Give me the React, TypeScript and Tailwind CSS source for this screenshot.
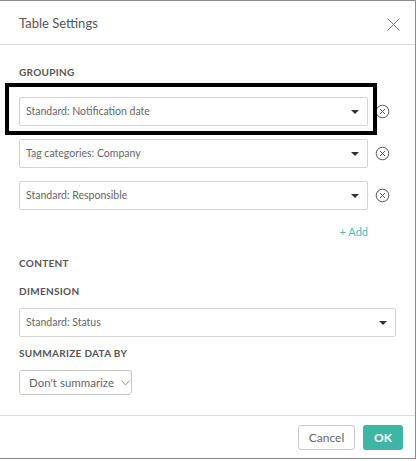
import React from 'react';

const font = { fontFamily: 'Lato, "Liberation Sans", sans-serif' };

function Caret() {
  return (
    <svg width="10" height="6" viewBox="0 0 10 6" className="shrink-0">
      <path d="M1 1h8L5 5z" fill="#333" />
    </svg>
  );
}

function RemoveIcon() {
  return (
    <svg width="15" height="15" viewBox="0 0 15 15" className="shrink-0">
      <circle cx="7.5" cy="7.5" r="6.3" fill="none" stroke="#555" strokeWidth="1" />
      <path d="M5 5l5 5M10 5l-5 5" stroke="#555" strokeWidth="1" />
    </svg>
  );
}

function SelectBox({ label, wide }: { label: string; wide?: boolean }) {
  return (
    <div
      className={`${wide ? 'w-[377px]' : 'w-[349px]'} h-[29px] border border-[#d4d4d4] rounded-[2px] bg-white flex items-center justify-between pl-[6px] pr-[7px]`}
    >
      <span className="text-[10.5px] text-[#666] whitespace-nowrap">{label}</span>
      <Caret />
    </div>
  );
}

function GroupRow({ label }: { label: string }) {
  return (
    <div className="flex items-center gap-[7px]">
      <SelectBox label={label} />
      <RemoveIcon />
    </div>
  );
}

function SectionLabel({ children }: { children: React.ReactNode }) {
  return (
    <div className="text-[10px] font-bold tracking-[0.3px] text-[#555] leading-[14px]">{children}</div>
  );
}

export default function App() {
  return (
    <div className="w-[418px] h-[461px] bg-white relative" style={font}>
      <div className="w-[416px] h-[459px] border border-l-0 border-[#8c8c8c] flex flex-col bg-white">
        {/* header */}
        <div className="h-[44px] border-b border-[#dcdcdc] flex items-center justify-between pl-[19px] pr-[15px] pt-[3px]">
          <span className="text-[13px] text-[#555]">Table Settings</span>
          <svg width="13" height="13" viewBox="0 0 13 13">
            <path d="M0.5 0.5l12 12M12.5 0.5l-12 12" stroke="#777" strokeWidth="1" />
          </svg>
        </div>

        {/* body */}
        <div className="flex-1 px-[19px] pt-[20px]">
          <SectionLabel>GROUPING</SectionLabel>
          <div className="mt-[18px] flex flex-col gap-[13px]">
            <GroupRow label="Standard: Notification date" />
            <GroupRow label="Tag categories: Company" />
            <GroupRow label="Standard: Responsible" />
          </div>
          <div className="w-[349px] flex justify-end mt-[15px]">
            <span className="text-[11px] text-[#4dbdab] leading-[14px]">+ Add</span>
          </div>
          <div className="mt-[17px]">
            <SectionLabel>CONTENT</SectionLabel>
          </div>
          <div className="mt-[14px]">
            <SectionLabel>DIMENSION</SectionLabel>
          </div>
          <div className="mt-[10px]">
            <SelectBox label="Standard: Status" wide />
          </div>
          <div className="mt-[9px]">
            <SectionLabel>SUMMARIZE DATA BY</SectionLabel>
          </div>
          <button className="mt-[10px] w-[113px] h-[25px] border border-[#c8c8c8] rounded-[3px] flex items-center pl-[9px] gap-[7px]">
            <span className="text-[11.5px] text-[#666] whitespace-nowrap">Don't summarize</span>
            <svg width="9" height="6" viewBox="0 0 9 6" className="shrink-0">
              <path d="M0.5 0.5l4 4.5 4-4.5" fill="none" stroke="#999" strokeWidth="1" />
            </svg>
          </button>
        </div>

        {/* footer */}
        <div className="h-[43px] border-t border-[#dcdcdc] flex items-start justify-end gap-[8px] pr-[12px] pt-[9px]">
          <button className="w-[57px] h-[25px] border border-[#c8c8c8] rounded-[3px] text-[12px] text-[#666] bg-white">
            Cancel
          </button>
          <button className="w-[40px] h-[25px] rounded-[3px] text-[12px] font-bold text-white bg-[#3fb5a5]">
            OK
          </button>
        </div>
      </div>

      {/* highlight annotation */}
      <div className="absolute left-[5px] top-[83px] w-[372px] h-[52px] border-[4px] border-black pointer-events-none" />
    </div>
  );
}
